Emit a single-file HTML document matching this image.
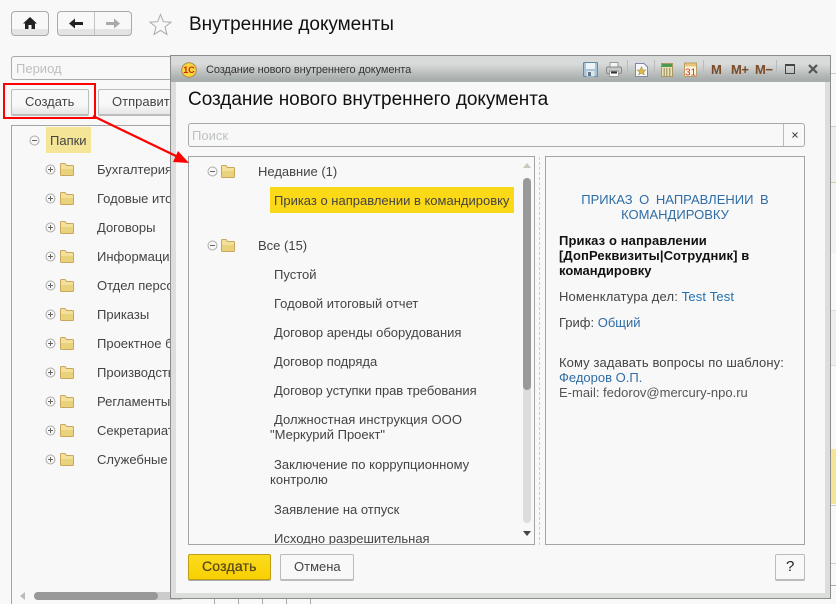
<!DOCTYPE html>
<html><head><meta charset="utf-8">
<style>
html,body{margin:0;padding:0;overflow:hidden;width:836px;height:604px}
body{position:relative;background:#f8f8f8;font-family:"Liberation Sans",sans-serif;font-size:13px;color:#444}
.a{position:absolute;box-sizing:border-box}
.t{position:absolute;white-space:nowrap;line-height:15px;letter-spacing:0}
.btn{position:absolute;box-sizing:border-box;border:1px solid #bcbcbc;border-radius:2px;background:linear-gradient(#f8f8f8 0,#f8f8f8 60%,#e6e6e6 100%);box-shadow:0 1px 0 #bbb}
</style></head><body>

<!-- background window -->
<div class="a" style="left:11px;top:11px;width:38px;height:25px;border:1px solid #aaa;border-radius:4px;background:linear-gradient(#f8f8f8 75%,#e4e4e4 75%)"></div>
<svg class="a" style="left:22px;top:16px" width="16" height="14"><path d="M8 1L1 7.5h2V13h3.5V9h3v4H13V7.5h2z" fill="#222"/></svg>
<div class="a" style="left:57px;top:11px;width:75px;height:25px;border:1px solid #aaa;border-radius:4px;background:linear-gradient(#f8f8f8 75%,#e4e4e4 75%)"></div>
<div class="a" style="left:94px;top:12px;width:1px;height:23px;background:#c4c4c4"></div>
<svg class="a" style="left:68px;top:17px" width="16" height="13"><path d="M1 6.5L7 1.5V5H15V8H7V11.5z" fill="#222"/></svg>
<svg class="a" style="left:105px;top:17px" width="16" height="13"><path d="M15 6.5L9 1.5V5H1V8H9V11.5z" fill="#aaa"/></svg>
<svg class="a" style="left:149px;top:13px" width="23" height="23"><path d="M11.5 1.5L14.3 8.7L22 9.2L16 14L18 21.5L11.5 17.4L5 21.5L7 14L1 9.2L8.7 8.7Z" fill="none" stroke="#aaa" stroke-width="1"/></svg>
<div class="t" style="left:189px;top:14px;font-size:19px;line-height:21px;color:#111;letter-spacing:-.05px">Внутренние документы</div>

<div class="a" style="left:11px;top:56px;width:170px;height:24px;border:1px solid #aaa;border-radius:3px"></div>
<div class="t" style="left:16px;top:61px;color:#bcbfbc">Период</div>

<div class="btn" style="left:11px;top:89px;width:78px;height:26px"></div>
<div class="t" style="left:25px;top:94px">Создать</div>
<div class="btn" style="left:98px;top:89px;width:90px;height:26px"></div>
<div class="t" style="left:112px;top:94px">Отправить</div>
<div class="a" style="left:3px;top:83px;width:93px;height:36px;border:2px solid #f00"></div>

<div class="a" style="left:11px;top:125px;width:180px;height:479px;border:1px solid #a4a4a4;border-right:0;border-bottom:0"></div>
<div class="a" style="left:46px;top:127px;width:45px;height:26px;background:#f5e597"></div>
<div class="t" style="left:50px;top:133px">Папки</div>
<svg class="a" style="left:29px;top:135px" width="11" height="11"><circle cx="5.5" cy="5.5" r="4.5" fill="none" stroke="#aaa"/><path d="M3 5.5h5" stroke="#666"/></svg>

<svg width="0" height="0" style="position:absolute"><defs>
<symbol id="f" viewBox="0 0 14 13"><path d="M.5 3V1.5Q.5.5 1.5.5H5L6.5 2.5H12.5Q13.5 2.5 13.5 3.5V11.5Q13.5 12.5 12.5 12.5H1.5Q.5 12.5 .5 11.5Z" fill="#f3e09a" stroke="#c9a65c"/><rect x="1" y="6" width="12" height="6" fill="#e8d27c"/></symbol>
<symbol id="p" viewBox="0 0 11 11"><circle cx="5.5" cy="5.5" r="4.5" fill="none" stroke="#aaa"/><path d="M3 5.5h5M5.5 3v5" stroke="#666"/></symbol>
<symbol id="m" viewBox="0 0 11 11"><circle cx="5.5" cy="5.5" r="4.5" fill="none" stroke="#aaa"/><path d="M3 5.5h5" stroke="#666"/></symbol>
</defs></svg>

<svg class="a" style="left:45px;top:164px" width="11" height="11"><use href="#p"/></svg><svg class="a" style="left:60px;top:163px" width="14" height="13"><use href="#f"/></svg><div class="t" style="left:97px;top:162px">Бухгалтерия</div>
<svg class="a" style="left:45px;top:193px" width="11" height="11"><use href="#p"/></svg><svg class="a" style="left:60px;top:192px" width="14" height="13"><use href="#f"/></svg><div class="t" style="left:97px;top:191px">Годовые итоги</div>
<svg class="a" style="left:45px;top:222px" width="11" height="11"><use href="#p"/></svg><svg class="a" style="left:60px;top:221px" width="14" height="13"><use href="#f"/></svg><div class="t" style="left:97px;top:220px">Договоры</div>
<svg class="a" style="left:45px;top:251px" width="11" height="11"><use href="#p"/></svg><svg class="a" style="left:60px;top:250px" width="14" height="13"><use href="#f"/></svg><div class="t" style="left:97px;top:249px">Информация</div>
<svg class="a" style="left:45px;top:280px" width="11" height="11"><use href="#p"/></svg><svg class="a" style="left:60px;top:279px" width="14" height="13"><use href="#f"/></svg><div class="t" style="left:97px;top:278px">Отдел персонала</div>
<svg class="a" style="left:45px;top:309px" width="11" height="11"><use href="#p"/></svg><svg class="a" style="left:60px;top:308px" width="14" height="13"><use href="#f"/></svg><div class="t" style="left:97px;top:307px">Приказы</div>
<svg class="a" style="left:45px;top:338px" width="11" height="11"><use href="#p"/></svg><svg class="a" style="left:60px;top:337px" width="14" height="13"><use href="#f"/></svg><div class="t" style="left:97px;top:336px">Проектное бюро</div>
<svg class="a" style="left:45px;top:367px" width="11" height="11"><use href="#p"/></svg><svg class="a" style="left:60px;top:366px" width="14" height="13"><use href="#f"/></svg><div class="t" style="left:97px;top:365px">Производство</div>
<svg class="a" style="left:45px;top:396px" width="11" height="11"><use href="#p"/></svg><svg class="a" style="left:60px;top:395px" width="14" height="13"><use href="#f"/></svg><div class="t" style="left:97px;top:394px">Регламенты</div>
<svg class="a" style="left:45px;top:425px" width="11" height="11"><use href="#p"/></svg><svg class="a" style="left:60px;top:424px" width="14" height="13"><use href="#f"/></svg><div class="t" style="left:97px;top:423px">Секретариат</div>
<svg class="a" style="left:45px;top:454px" width="11" height="11"><use href="#p"/></svg><svg class="a" style="left:60px;top:453px" width="14" height="13"><use href="#f"/></svg><div class="t" style="left:97px;top:452px">Служебные</div>

<svg class="a" style="left:20px;top:591px" width="6" height="10"><path d="M0 5L5 1V9Z" fill="#bbb"/></svg>
<div class="a" style="left:34px;top:592px;width:150px;height:8px;background:#ccc;border-radius:4px"></div>
<div class="a" style="left:34px;top:592px;width:124px;height:8px;background:#999;border-radius:4px"></div>
<div class="a" style="left:214px;top:598px;width:1px;height:6px;background:#aaa"></div>
<div class="a" style="left:238px;top:598px;width:1px;height:6px;background:#aaa"></div>
<div class="a" style="left:262px;top:598px;width:1px;height:6px;background:#aaa"></div>
<div class="a" style="left:286px;top:598px;width:1px;height:6px;background:#aaa"></div>
<div class="a" style="left:310px;top:598px;width:1px;height:6px;background:#aaa"></div>

<!-- right sliver -->
<div class="a" style="left:831px;top:73px;width:5px;height:1px;background:#ccc"></div>
<div class="a" style="left:831px;top:126px;width:5px;height:57px;background:#efefef;border-top:1px solid #ccc;border-bottom:1px solid #cfcfa8"></div>
<div class="a" style="left:831px;top:183px;width:5px;height:70px;background:#f2f2f2"></div>
<div class="a" style="left:831px;top:310px;width:5px;height:56px;background:#efefef;border-top:1px solid #ddd;border-bottom:1px solid #ddd"></div>
<div class="a" style="left:831px;top:449px;width:5px;height:55px;background:#f5e597"></div>
<div class="a" style="left:831px;top:505px;width:5px;height:1px;background:#ccc"></div>
<div class="a" style="left:831px;top:563px;width:5px;height:1px;background:#ccc"></div>
<div class="a" style="left:831px;top:585px;width:5px;height:1px;background:#aaa"></div>

<!-- dialog -->
<div class="a" style="left:170px;top:55px;width:661px;height:544px;background:#dcdedc;border:1px solid #8c8c8c"></div>
<div class="a" style="left:171px;top:56px;width:659px;height:26px;background:linear-gradient(#d8dbd9 0,#d8dbd9 30%,#a8adad 90%,#a8adad 100%)"></div>
<div class="a" style="left:176px;top:82px;width:649px;height:511px;background:#f8f8f8"></div>

<svg class="a" style="left:181px;top:62px" width="16" height="16"><circle cx="8" cy="8" r="7.3" fill="#f8d838" stroke="#b08a50"/><text x="8" y="11" text-anchor="middle" font-size="9" font-weight="bold" font-family="Liberation Sans" fill="#d02020">1С</text></svg>
<div class="t" style="left:206px;top:63px;font-size:11px;letter-spacing:-.11px;color:#333">Создание нового внутреннего документа</div>

<!-- toolbar icons -->
<svg class="a" style="left:583px;top:62px" width="15" height="15"><rect x=".5" y=".5" width="14" height="14" rx="1" fill="#a8c4d8" stroke="#5d8ba8"/><rect x="3" y="1" width="9" height="6" fill="#eef3f6"/><rect x="3.500" y="9" width="8" height="5.500" fill="#dfe6ea"/><rect x="5" y="10" width="3" height="4" fill="#678"/></svg>
<svg class="a" style="left:606px;top:62px" width="16" height="15"><rect x="4" y=".5" width="8" height="5" fill="#f4f4f4" stroke="#999"/><rect x=".5" y="5" width="15" height="6.500" rx="1.500" fill="#c4c8c8" stroke="#888"/><rect x="3.500" y="9" width="9" height="5.500" fill="#f8f8f8" stroke="#999"/><rect x="5" y="9.500" width="6" height="2" fill="#333"/></svg>
<div class="a" style="left:627px;top:60px;width:1px;height:13px;background:#bbb"></div>
<svg class="a" style="left:635px;top:63px" width="13" height="14"><path d="M.5.5H9L12.500 4V13.500H.5Z" fill="#f4f6fa" stroke="#7a8aa8"/><path d="M6.500 3.500L8 7H11L8.500 9L9.500 12L6.500 10.200L3.500 12L4.500 9L2 7H5Z" fill="#dcb74a" stroke="#a08a30" stroke-width=".5"/></svg>
<div class="a" style="left:654px;top:60px;width:1px;height:13px;background:#bbb"></div>
<svg class="a" style="left:661px;top:63px" width="12" height="14"><rect x=".5" y=".5" width="11" height="13" fill="#f0e2ac" stroke="#a89860"/><rect x="1" y="1" width="10" height="3" fill="#4a9a50"/><path d="M2.500 6h1.500M5 6h1.500M8 6h1.500M2.500 8h1.500M5 8h1.500M8 8h1.500M2.500 10h1.500M5 10h1.500M8 10h1.500M2.500 12h1.500M5 12h1.500M8 12h1.500" stroke="#665" stroke-width="1"/></svg>
<svg class="a" style="left:684px;top:62px" width="13" height="15"><rect x=".5" y="1" width="12" height="13.500" fill="#faf6e4" stroke="#b89e68"/><rect x="1" y="1.500" width="11" height="3" fill="#e8c878"/><text x="6.500" y="13.500" text-anchor="middle" font-size="10" font-family="Liberation Sans" fill="#e02818">31</text></svg>
<div class="a" style="left:703px;top:60px;width:1px;height:13px;background:#bbb"></div>
<div class="t" style="left:711px;top:62px;font-weight:bold;color:#7a4a26">M</div>
<div class="t" style="left:731px;top:62px;font-weight:bold;color:#7a4a26;letter-spacing:-.5px">M+</div>
<div class="t" style="left:755px;top:62px;font-weight:bold;color:#7a4a26;letter-spacing:-.5px">M−</div>
<div class="a" style="left:776px;top:60px;width:1px;height:13px;background:#bbb"></div>
<div class="a" style="left:785px;top:64px;width:10px;height:10px;border:1px solid #444;border-top-width:2px"></div>
<svg class="a" style="left:808px;top:64px" width="10" height="10"><path d="M1 1L9 9M9 1L1 9" stroke="#555" stroke-width="2.200"/></svg>

<div class="t" style="left:188px;top:89px;font-size:19px;line-height:21px;color:#111;letter-spacing:-.03px">Создание нового внутреннего документа</div>

<div class="a" style="left:188px;top:123px;width:617px;height:24px;border:1px solid #aaa;border-radius:3px"></div>
<div class="a" style="left:783px;top:124px;width:1px;height:22px;background:#bbb"></div>
<svg class="a" style="left:791px;top:131px" width="8" height="8"><path d="M1.500 1.500L6.500 6.500M6.500 1.500L1.500 6.500" stroke="#444"/></svg>
<div class="t" style="left:192px;top:128px;color:#bcc2c2">Поиск</div>

<!-- list -->
<div class="a" style="left:188px;top:156px;width:347px;height:389px;border:1px solid #a4a4a4;overflow:hidden">
<svg class="a" style="left:18px;top:9px" width="11" height="11"><use href="#m"/></svg>
<svg class="a" style="left:32px;top:8px" width="14" height="13"><use href="#f"/></svg>
<div class="t" style="left:69px;top:7px">Недавние (1)</div>
<div class="a" style="left:81px;top:30px;width:244px;height:26px;background:#fcd916"></div>
<div class="t" style="left:85px;top:36px">Приказ о направлении в командировку</div>
<svg class="a" style="left:18px;top:83px" width="11" height="11"><use href="#m"/></svg>
<svg class="a" style="left:32px;top:82px" width="14" height="13"><use href="#f"/></svg>
<div class="t" style="left:69px;top:81px">Все (15)</div>
<div class="t" style="left:85px;top:110px">Пустой</div>
<div class="t" style="left:85px;top:139px">Годовой итоговый отчет</div>
<div class="t" style="left:85px;top:168px">Договор аренды оборудования</div>
<div class="t" style="left:85px;top:197px">Договор подряда</div>
<div class="t" style="left:85px;top:226px;letter-spacing:-.05px">Договор уступки прав требования</div>
<div class="t" style="left:85px;top:255px;letter-spacing:.08px">Должностная инструкция ООО</div>
<div class="t" style="left:81px;top:270px">"Меркурий Проект"</div>
<div class="t" style="left:85px;top:300px">Заключение по коррупционному</div>
<div class="t" style="left:81px;top:315px">контролю</div>
<div class="t" style="left:85px;top:345px">Заявление на отпуск</div>
<div class="t" style="left:85px;top:374px">Исходно разрешительная</div>
<div class="a" style="left:334px;top:21px;width:8px;height:345px;background:#dcdedc;border-radius:4px"></div>
<div class="a" style="left:334px;top:21px;width:8px;height:212px;background:#999;border-radius:4px"></div>
<svg class="a" style="left:334px;top:6px" width="8" height="6"><path d="M4 0L8 5H0Z" fill="#c8c8bc"/></svg>
<svg class="a" style="left:334px;top:374px" width="8" height="6"><path d="M4 5L8 0H0Z" fill="#444"/></svg>
</div>
<div class="a" style="left:539px;top:157px;width:1px;height:388px;border-left:1px dashed #ccc"></div>

<!-- preview -->
<div class="a" style="left:545px;top:156px;width:260px;height:389px;border:1px solid #a4a4a4"></div>
<div class="t" style="left:545px;width:260px;top:192px;text-align:center;color:#2f6da6;word-spacing:3px">ПРИКАЗ О НАПРАВЛЕНИИ В</div>
<div class="t" style="left:545px;width:260px;top:207px;text-align:center;color:#2f6da6">КОМАНДИРОВКУ</div>
<div class="t" style="left:559px;top:233px;font-weight:bold;color:#111;letter-spacing:.1px">Приказ о направлении</div>
<div class="t" style="left:559px;top:248px;font-weight:bold;color:#111;letter-spacing:.1px">[ДопРеквизиты|Сотрудник] в</div>
<div class="t" style="left:559px;top:263px;font-weight:bold;color:#111">командировку</div>
<div class="t" style="left:559px;top:289px;letter-spacing:.15px">Номенклатура дел: <span style="color:#1f6fb0">Test Test</span></div>
<div class="t" style="left:559px;top:315px">Гриф: <span style="color:#2f6da6">Общий</span></div>
<div class="t" style="left:559px;top:355px;letter-spacing:.1px">Кому задавать вопросы по шаблону:</div>
<div class="t" style="left:559px;top:370px;color:#2f6da6">Федоров О.П.</div>
<div class="t" style="left:559px;top:385px;color:#555">E-mail: fedorov@mercury-npo.ru</div>

<!-- buttons -->
<div class="a" style="left:188px;top:554px;width:83px;height:26px;border:1px solid #c09c10;border-radius:2px;background:linear-gradient(#fcdc20,#f8d000);box-shadow:0 1px 0 #aaa"></div>
<div class="t" style="left:202px;top:559px;font-size:14px;color:#5a4a1a;letter-spacing:.2px;-webkit-text-stroke:.3px #5a4a1a">Создать</div>
<div class="btn" style="left:280px;top:554px;width:74px;height:26px;background:#f8f8f8"></div>
<div class="t" style="left:294px;top:559px">Отмена</div>
<div class="btn" style="left:775px;top:554px;width:30px;height:26px;background:#f8f8f8"></div>
<div class="t" style="left:786px;top:559px;font-size:15px;color:#222">?</div>

<!-- red arrow -->
<svg class="a" style="left:0;top:0" width="836" height="604"><path d="M93 116L178 157" stroke="#f00" stroke-width="2.200"/><path d="M189 163L173 162L178 151Z" fill="#f00"/></svg>
</body></html>
